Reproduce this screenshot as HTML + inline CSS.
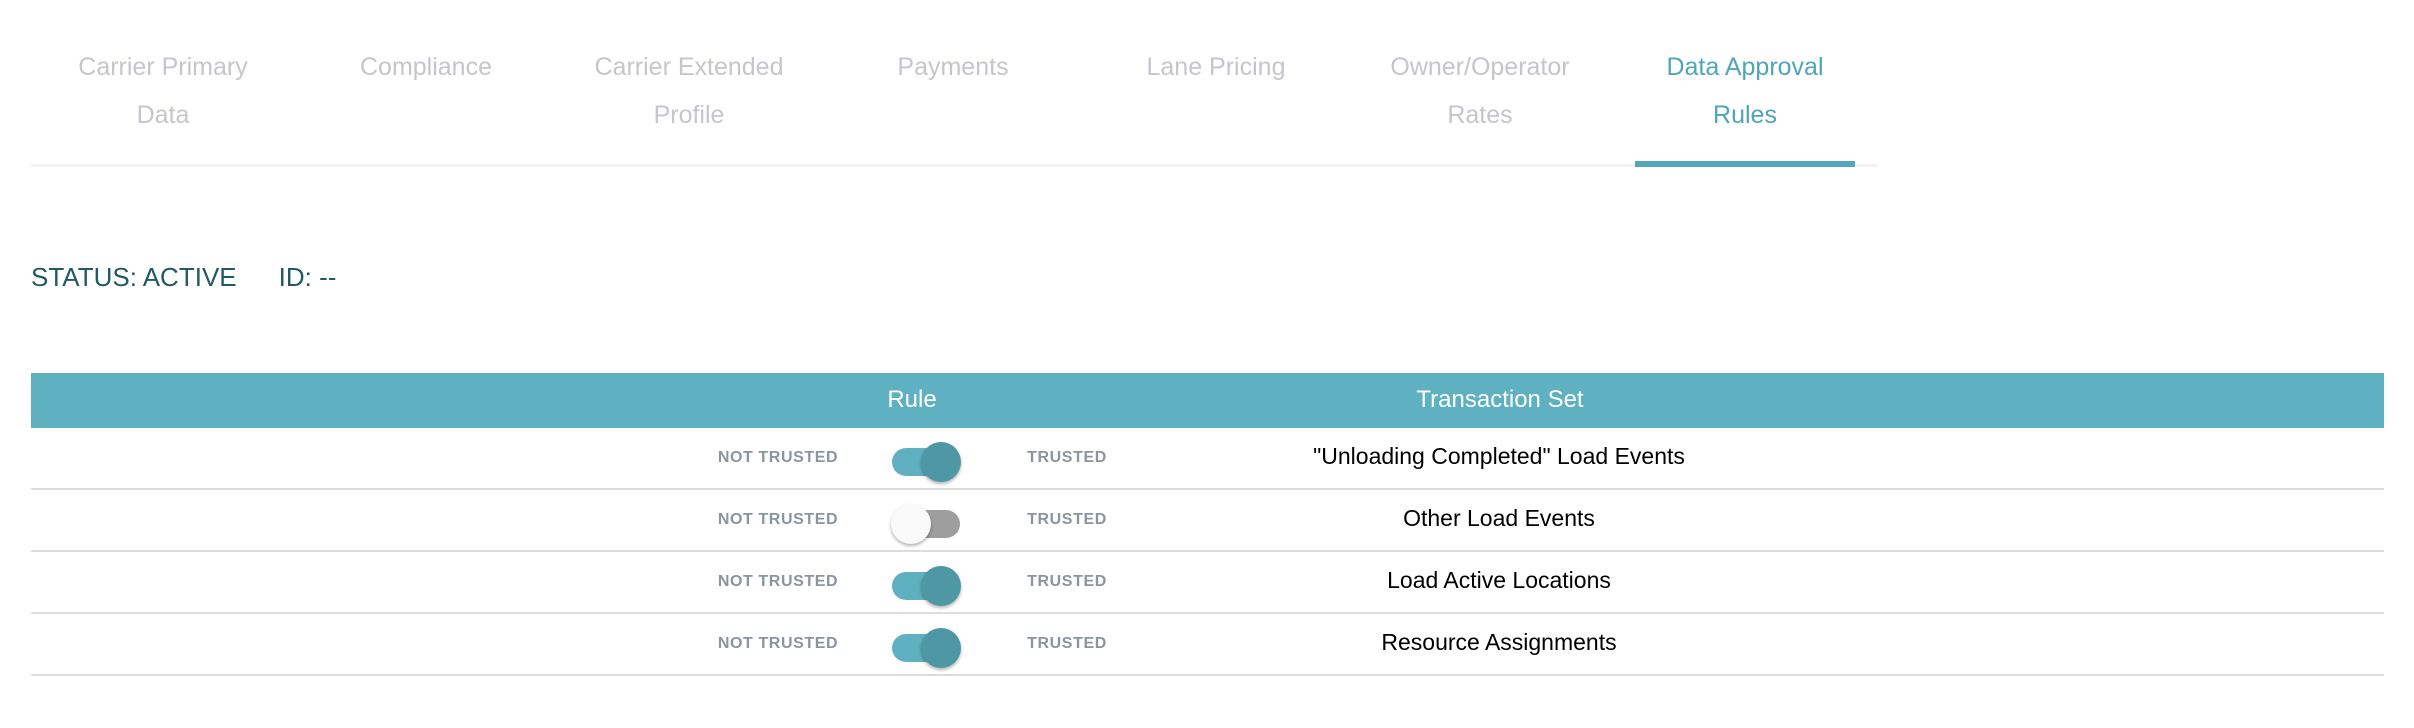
<!DOCTYPE html>
<html><head><meta charset="utf-8"><style>
*{margin:0;padding:0;box-sizing:border-box}
body{width:2414px;height:728px;background:#fff;font-family:"Liberation Sans",sans-serif;position:relative;overflow:hidden}
.tab{position:absolute;top:43px;width:264px;text-align:center;font-size:25px;line-height:48px;color:#c5c5cd}
.tab.act{color:#4ea6b6}
.line{position:absolute;left:31px;top:164px;width:1846px;height:3px;background:#f2f2f2}
.ul{position:absolute;left:1635px;top:161px;width:220px;height:6px;background:#52a8b8}
.status{position:absolute;left:31px;top:262px;font-size:26px;color:#215a66;line-height:30px}
.hdr{position:absolute;left:31px;top:373px;width:2353px;height:55px;background:#5fb1c1;color:#fff;font-size:24px}
.hdr span{position:absolute;top:13px;transform:translateX(-50%)}
.row{position:absolute;left:31px;width:2353px;height:62px;border-bottom:2px solid #dcdcdc}
.lbl{position:absolute;top:21px;font-size:16px;font-weight:bold;color:#8a959f;transform:translateX(-50%);letter-spacing:.6px}
.txt{position:absolute;top:15px;font-size:23px;color:#000;transform:translateX(-50%);white-space:nowrap}
.trk{position:absolute;left:861px;top:20px;width:68px;height:28px;border-radius:14px;background:#5fb1c1}
.thm{position:absolute;left:890px;top:14px;width:40px;height:40px;border-radius:50%;background:#4e98a6;box-shadow:0 2px 3px rgba(0,0,0,.3)}
.off .trk{background:#9e9e9e}
.off .thm{left:860px;background:#fafafa}
</style></head><body>
<div class="tab" style="left:31px">Carrier Primary<br>Data</div>
<div class="tab" style="left:294px">Compliance</div>
<div class="tab" style="left:557px">Carrier Extended<br>Profile</div>
<div class="tab" style="left:821px">Payments</div>
<div class="tab" style="left:1084px">Lane Pricing</div>
<div class="tab" style="left:1348px">Owner/Operator<br>Rates</div>
<div class="tab act" style="left:1613px">Data Approval<br>Rules</div>
<div class="line"></div><div class="ul"></div>
<div class="status">STATUS: ACTIVE<span style="margin-left:42px">ID: --</span></div>
<div class="hdr"><span style="left:881px">Rule</span><span style="left:1469px">Transaction Set</span></div>

<div class="row" style="top:428px"><span class="lbl" style="left:747px">NOT TRUSTED</span><div class="trk"></div><div class="thm"></div><span class="lbl" style="left:1036px">TRUSTED</span><span class="txt" style="left:1468px">"Unloading Completed" Load Events</span></div>
<div class="row off" style="top:490px"><span class="lbl" style="left:747px">NOT TRUSTED</span><div class="trk"></div><div class="thm"></div><span class="lbl" style="left:1036px">TRUSTED</span><span class="txt" style="left:1468px">Other Load Events</span></div>
<div class="row" style="top:552px"><span class="lbl" style="left:747px">NOT TRUSTED</span><div class="trk"></div><div class="thm"></div><span class="lbl" style="left:1036px">TRUSTED</span><span class="txt" style="left:1468px">Load Active Locations</span></div>
<div class="row" style="top:614px"><span class="lbl" style="left:747px">NOT TRUSTED</span><div class="trk"></div><div class="thm"></div><span class="lbl" style="left:1036px">TRUSTED</span><span class="txt" style="left:1468px">Resource Assignments</span></div>
</body></html>
